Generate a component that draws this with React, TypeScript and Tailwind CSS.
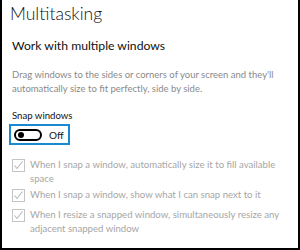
import React from "react";

const Check = () => (
  <div className="w-[13px] h-[13px] border border-[#c4c4c4] flex items-center justify-center shrink-0 mt-[1px]">
    <svg width="11" height="11" viewBox="0 0 11 11">
      <path d="M1.5 5.5 L4 8.5 L9.5 1.5" fill="none" stroke="#b8b8b8" strokeWidth="1.1" />
    </svg>
  </div>
);

const Item = ({ text, className }: { text: string; className: string }) => (
  <div className={"flex gap-[5px] items-start " + className}>
    <Check />
    <div className="text-[9.6px] leading-[14px] text-[#a6a6a6]">{text}</div>
  </div>
);

export default function App() {
  return (
    <div
      className="w-[300px] h-[250px] bg-white border-l-2 border-r-2 border-b-2 border-black overflow-hidden pl-[8px] pr-[6px]"
      style={{ fontFamily: 'Lato, "Noto Sans", sans-serif' }}
    >
      <div className="text-[17.5px] leading-[24px] font-light text-[#111] mt-[2px]">Multitasking</div>
      <div className="text-[12.2px] leading-[18px] text-[#111] mt-[11px] ml-[2px]">Work with multiple windows</div>
      <div className="text-[9.5px] leading-[13.5px] text-[#8a8a8a] mt-[13px] ml-[2px]">
        Drag windows to the sides or corners of your screen and they'll automatically size to fit perfectly, side by side.
      </div>
      <div className="text-[9.6px] leading-[14px] text-[#111] mt-[14px] ml-[2px]">Snap windows</div>
      <div className="mt-[1px] ml-[-1px] w-[61px] h-[21px] border-2 border-[#1a8ad0] flex items-center pl-[3px] gap-[7px]">
        <div className="w-[28px] h-[12px] border-2 border-black rounded-full flex items-center pl-[2px]">
          <div className="w-[6px] h-[6px] rounded-full bg-black" />
        </div>
        <div className="text-[10px] leading-[14px] text-[#111]">Off</div>
      </div>
      <div className="flex flex-col mt-[13px] ml-[2px]">
        <Item className="" text="When I snap a window, automatically size it to fill available space" />
        <Item className="mt-[2px]" text="When I snap a window, show what I can snap next to it" />
        <Item className="mt-[6px]" text="When I resize a snapped window, simultaneously resize any adjacent snapped window" />
      </div>
    </div>
  );
}
